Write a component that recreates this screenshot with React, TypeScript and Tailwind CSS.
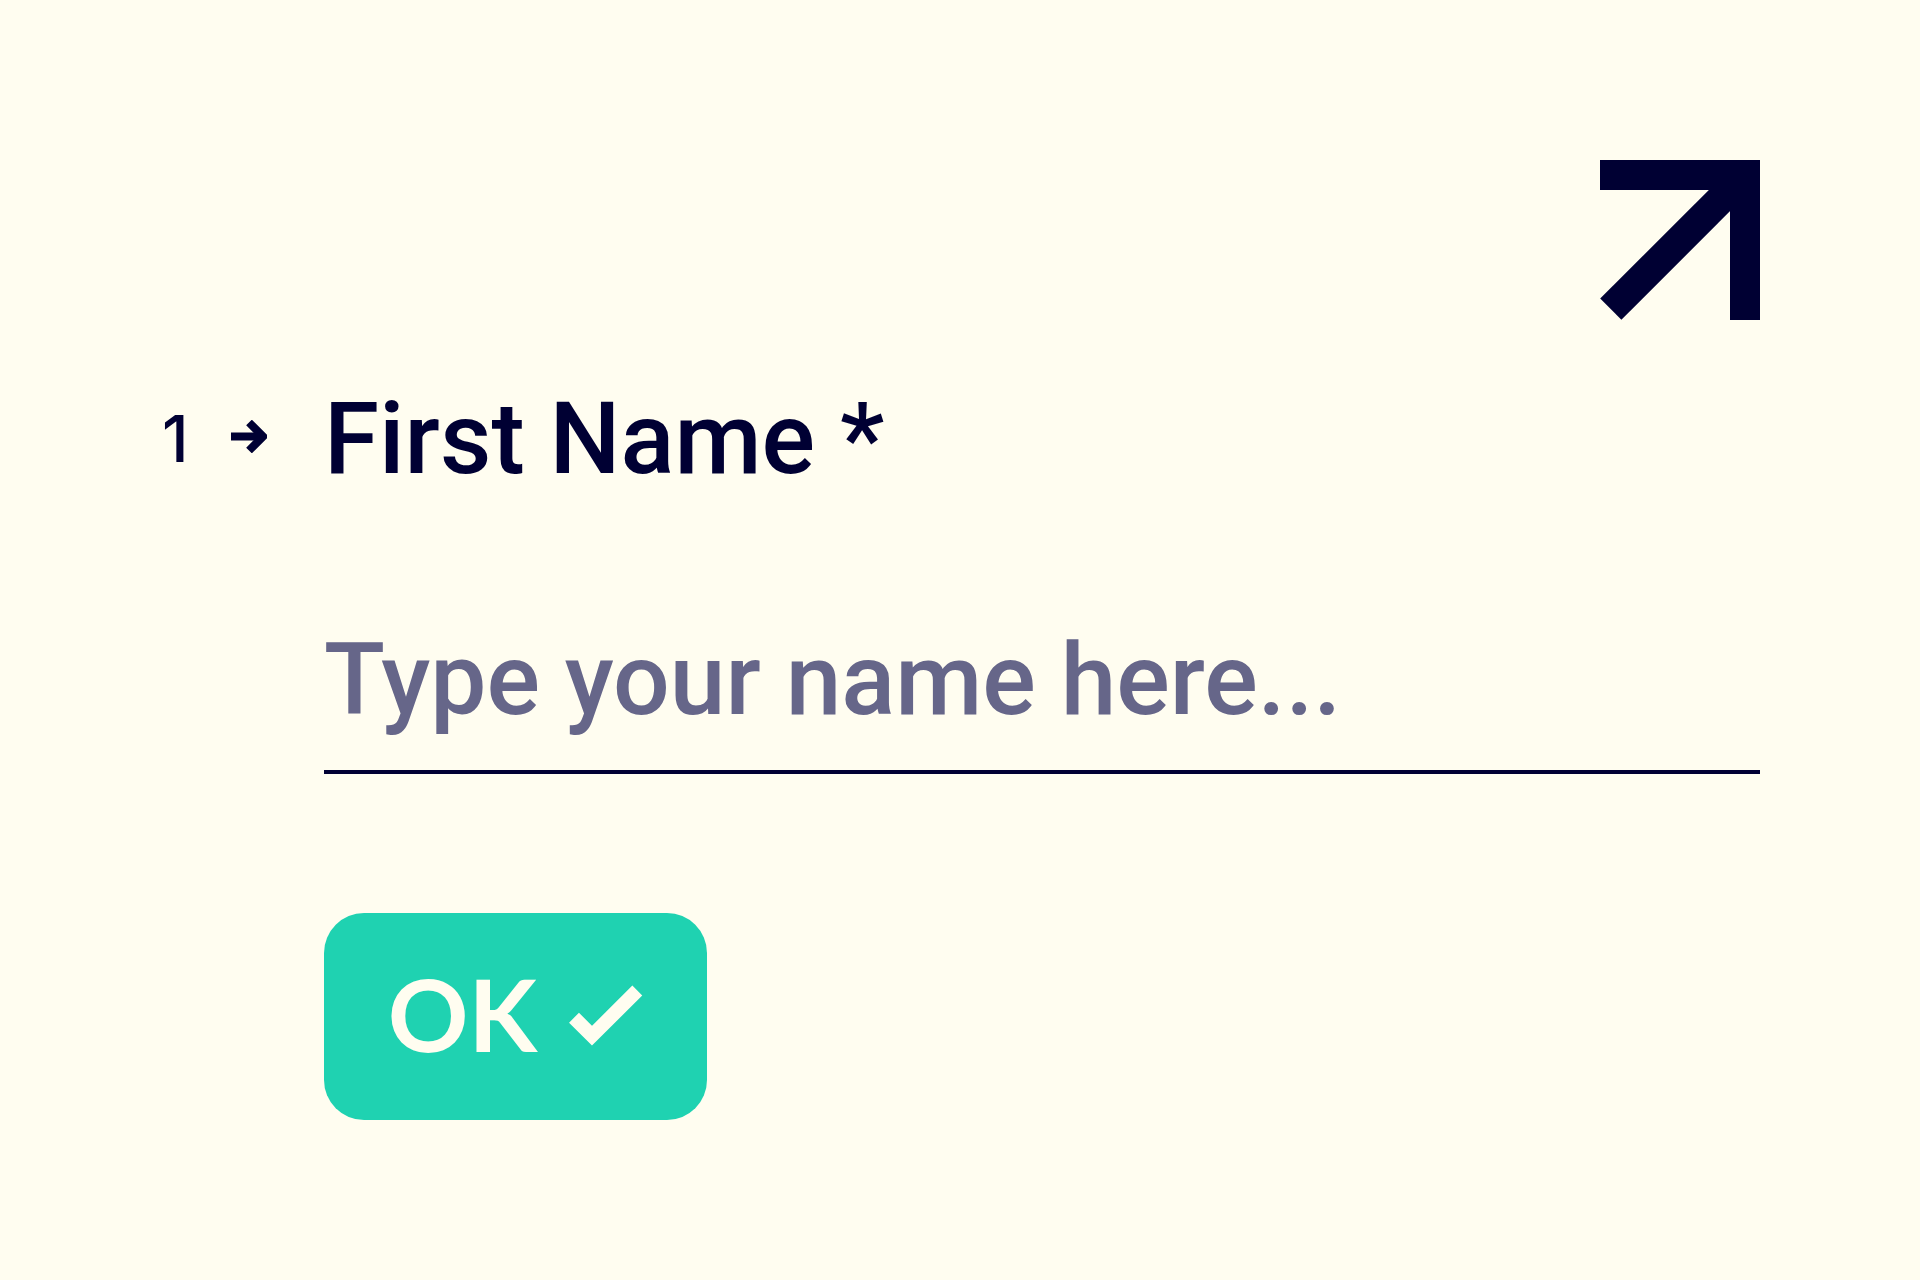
import React from "react";

export default function App() {
  return (
    <div className="w-[1920px] h-[1280px] bg-[#fffdf0] p-[160px] box-border flex flex-col overflow-hidden">
      <div className="flex justify-end h-[160px] shrink-0">
        <svg width="160" height="160" viewBox="0 0 160 160" fill="none">
          <path d="M0 15 H145 V160" stroke="#000033" strokeWidth="30" strokeLinejoin="miter" strokeLinecap="butt" />
          <path d="M10.8 149.2 L145 15" stroke="#000033" strokeWidth="30" strokeLinecap="butt" />
        </svg>
      </div>
      <div className="flex mt-[59px]">
        <div className="w-[164px] shrink-0 h-[120px] flex items-center">
          <span className="font-['Inter',sans-serif] text-[64px] leading-[120px] font-medium text-[#000033] ml-[2px]">1</span>
          <svg className="ml-[42px] -mt-[6px]" width="36" height="33" viewBox="0 0 36 33" fill="none">
            <path d="M0 16.5 H33" stroke="#000033" strokeWidth="8" />
            <path d="M18 2.5 L32 16.5 L18 30.5" stroke="#000033" strokeWidth="8" strokeLinejoin="miter" />
          </svg>
        </div>
        <div className="flex-1 flex flex-col">
          <h1 className="font-['Roboto',sans-serif] text-[100px] leading-[120px] font-medium text-[#000033] m-0">
            First Name *
          </h1>
          <input
            type="text"
            placeholder="Type your name here..."
            className="mt-[120px] block w-full h-[155px] box-border pb-[31px] pt-0 px-0 border-0 border-b-4 border-solid border-[#000033] bg-transparent font-['Roboto',sans-serif] text-[100px] leading-[120px] font-medium text-[#000033] outline-none placeholder:text-[#666689]"
          />
          <div className="mt-[139px]">
            <button className="w-[383px] h-[207px] rounded-[40px] bg-[#1fd2b1] flex items-center justify-center gap-[30px] border-0 cursor-pointer">
              <span className="font-['Lato',sans-serif] text-[100px] leading-none font-bold text-[#fffdf0] -mt-[8px]">OK</span>
              <svg className="-mt-[2px]" width="76" height="62" viewBox="0 0 76 62" fill="none">
                <path d="M7 32.7 L25 50.7 L70.3 5.5" stroke="#fffdf0" strokeWidth="14" strokeLinejoin="miter" strokeLinecap="butt" />
              </svg>
            </button>
          </div>
        </div>
      </div>
    </div>
  );
}
